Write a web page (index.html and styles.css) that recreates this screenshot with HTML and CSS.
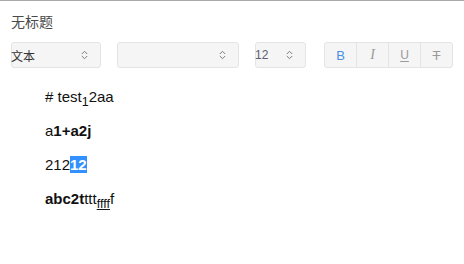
FILE: index.html
```html
<!DOCTYPE html>
<html>
<head>
<meta charset="utf-8">
<link rel="stylesheet" href="styles.css">
</head>
<body>
<div class="page">
  <div class="title">无标题</div>
  <div class="toolbar">
    <div class="select s1"><span class="val">文本</span><svg class="chev" width="7" height="10" viewBox="0 0 7 10"><path d="M0.8 4L3.5 1.3L6.2 4M0.8 6L3.5 8.7L6.2 6" fill="none" stroke="#7a7a7a" stroke-width="1"/></svg></div>
    <div class="select s2"><span class="val"></span><svg class="chev" width="7" height="10" viewBox="0 0 7 10"><path d="M0.8 4L3.5 1.3L6.2 4M0.8 6L3.5 8.7L6.2 6" fill="none" stroke="#7a7a7a" stroke-width="1"/></svg></div>
    <div class="select s3"><span class="val num">12</span><svg class="chev" width="7" height="10" viewBox="0 0 7 10"><path d="M0.8 4L3.5 1.3L6.2 4M0.8 6L3.5 8.7L6.2 6" fill="none" stroke="#7a7a7a" stroke-width="1"/></svg></div>
    <div class="btns">
      <div class="btn active">B</div>
      <div class="btn ital">I</div>
      <div class="btn und">U</div>
      <div class="btn strike">T</div>
    </div>
  </div>
  <div class="editor">
    <p># test<sub class="sub">1</sub>2aa</p>
    <p>a<b>1+a2j</b></p>
    <p>212<b class="sel">12</b></p>
    <p><b>abc2t</b>ttt<sub class="sub sub2">ffff</sub>f</p>
  </div>
</div>
</body>
</html>
```
FILE: styles.css
```css
html, body {
  margin: 0;
  padding: 0;
  background: #fff;
}
.page {
  border-top: 1px solid #a8a8a8;
  width: 464px;
  height: 263px;
  box-sizing: border-box;
}
.title {
  font-family: "Noto Sans CJK SC", sans-serif;
  font-size: 14px;
  line-height: 20px;
  color: #4a4a4a;
  padding: 10px 0 0 11px;
  height: 20px;
}
.toolbar {
  display: flex;
  align-items: center;
  margin-top: 11px;
  padding-left: 11px;
  height: 26px;
}
.select {
  box-sizing: border-box;
  height: 26px;
  background: #f5f5f5;
  border: 1px solid #e4e4e4;
  border-radius: 3px;
  display: flex;
  align-items: center;
  justify-content: space-between;
  padding-right: 12px;
}
.s1 { width: 90px; }
.s2 { width: 122px; margin-left: 16px; }
.s3 { width: 51px; margin-left: 16px; }
.val {
  font-family: "Noto Sans CJK SC", sans-serif;
  font-size: 12px;
  color: #333;
  margin-left: -1px;
}
.num {
  font-family: "Liberation Sans", sans-serif;
  font-size: 12px;
  color: #5a6270;
}
.chev { display: block; }
.btns {
  margin-left: 18px;
  display: flex;
  width: 129px;
  height: 26px;
  box-sizing: border-box;
  border: 1px solid #e4e4e4;
  border-radius: 3px;
  background: #f5f5f5;
}
.btn {
  flex: 1;
  display: flex;
  align-items: center;
  justify-content: center;
  font-family: "Liberation Sans", sans-serif;
  font-size: 13px;
  color: #9a9a9a;
  border-left: 1px solid #e4e4e4;
}
.btn:first-child { border-left: none; }
.btn.active { color: #4a90e2; }
.btn.ital { font-family: "Liberation Serif", serif; font-style: italic; font-size: 14px; }
.btn.und { text-decoration: underline; text-underline-offset: 2px; font-size: 12px; }
.btn.strike { text-decoration: line-through; font-size: 13px; }
.editor {
  padding-left: 45px;
  padding-top: 19px;
  font-family: "Liberation Sans", Arial, sans-serif;
  font-size: 15px;
  color: #111;
}
.editor p {
  margin: 0 0 14px 0;
  line-height: 20px;
  height: 20px;
}
.sub {
  font-size: smaller;
  vertical-align: sub;
  line-height: 0;
}
.sub2 {
  text-decoration: underline;
}
.sel {
  background: #3390ff;
  color: #fff;
}
```
